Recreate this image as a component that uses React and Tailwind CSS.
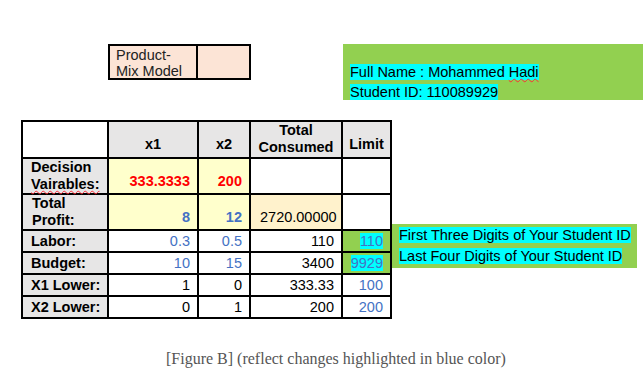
import React from 'react';

const blue = 'text-[#4472c4]';

const rows = [
  { label: 'Labor:', x1: '0.3', x2: '0.5', total: '110', limit: '110', hl: true },
  { label: 'Budget:', x1: '10', x2: '15', total: '3400', limit: '9929', hl: true },
  { label: 'X1 Lower:', x1: '1', x2: '0', total: '333.33', limit: '100', plain: true },
  { label: 'X2 Lower:', x1: '0', x2: '1', total: '200', limit: '200', plain: true },
];

const cell = 'border-2 border-black p-0';

const App = () => {
  return (
    <div className="w-[643px] h-[380px] bg-white overflow-hidden text-black text-[14.5px] font-['Liberation_Sans',Arial,sans-serif]">
      {/* Top row: model box + student info */}
      <div className="flex pt-[44px]">
        <div className="ml-[108px] flex h-[36px] w-[143px] border-2 border-black bg-[#fce4d6]">
          <div className="w-[88px] border-r-2 border-black pl-[6px] pt-[1px] leading-[16px] text-[#222]">
            Product-
            <br />
            Mix Model
          </div>
          <div className="flex-1" />
        </div>
        <div className="ml-[92px] h-[56px] w-[300px] bg-[#92d050] pl-[7px] pt-[18px] leading-[20px]">
          <div>
            <span className="bg-[#00ffff]">
              Full Name : Mohammed <span className="underline decoration-wavy decoration-red-500 decoration-1">Hadi</span>
            </span>
          </div>
          <div>
            <span className="bg-[#00ffff]">Student ID: 110089929</span>
          </div>
        </div>
      </div>

      {/* Table + side notes */}
      <div className="mt-[20px] ml-[21px] flex">
        <table className="table-fixed border-collapse">
          <colgroup>
            <col className="w-[86px]" />
            <col className="w-[90px]" />
            <col className="w-[52px]" />
            <col className="w-[92px]" />
            <col className="w-[49px]" />
          </colgroup>
          <tbody>
            <tr className="h-[35px] font-bold">
              <td className={`${cell} bg-white`} />
              <td className={`${cell} bg-[#e7e6e6] text-center align-bottom pb-[1px]`}>x1</td>
              <td className={`${cell} bg-[#e7e6e6] text-center align-bottom pb-[1px]`}>x2</td>
              <td className={`${cell} bg-[#e7e6e6] text-center align-bottom pb-[1px] leading-[17px]`}>
                Total
                <br />
                Consumed
              </td>
              <td className={`${cell} bg-[#e7e6e6] text-center align-bottom pb-[1px]`}>Limit</td>
            </tr>
            <tr className="h-[35px]">
              <td className={`${cell} bg-[#e7e6e6] font-bold align-bottom pl-[8px] leading-[17px]`}>
                Decision
                <br />
                <span className="underline decoration-wavy decoration-red-500 decoration-1">Vairables:</span>
              </td>
              <td className={`${cell} bg-[#ffffcc] text-right align-bottom pr-[7px] font-bold text-[#ff0000]`}>333.3333</td>
              <td className={`${cell} bg-[#ffffcc] text-right align-bottom pr-[7px] font-bold text-[#ff0000]`}>200</td>
              <td className={`${cell} bg-white`} />
              <td className={`${cell} bg-white`} />
            </tr>
            <tr className="h-[34px]">
              <td className={`${cell} bg-[#e7e6e6] font-bold align-bottom pl-[9px] leading-[17px]`}>
                Total
                <br />
                Profit:
              </td>
              <td className={`${cell} bg-[#ffffcc] text-right align-bottom pr-[7px] font-bold ${blue}`}>8</td>
              <td className={`${cell} bg-[#ffffcc] text-right align-bottom pr-[7px] font-bold ${blue}`}>12</td>
              <td className={`${cell} bg-[#fff2cc] align-bottom pl-[9px]`}>2720.00000</td>
              <td className={`${cell} bg-white`} />
            </tr>
            {rows.map((r) => (
              <tr key={r.label} className="h-[22px] leading-[18px]">
                <td className={`${cell} bg-[#e7e6e6] font-bold pl-[8px]`}>{r.label}</td>
                <td className={`${cell} text-right pr-[7px] ${r.plain ? '' : blue}`}>{r.x1}</td>
                <td className={`${cell} text-right pr-[7px] ${r.plain ? '' : blue}`}>{r.x2}</td>
                <td className={`${cell} text-right pr-[7px]`}>{r.total}</td>
                <td className={`${cell} text-right pr-[7px] ${r.hl ? 'bg-[#92d050]' : ''} ${blue}`}>
                  {r.hl ? <span className="bg-[#00ffff]">{r.limit}</span> : r.limit}
                </td>
              </tr>
            ))}
          </tbody>
        </table>
        <div className="mt-[104px] w-[245px] h-[44px] bg-[#92d050] pl-[7px] pt-[1px] leading-[21px]">
          <div>
            <span className="bg-[#00ffff]">First Three Digits of Your Student ID</span>
          </div>
          <div>
            <span className="bg-[#00ffff]">Last Four Digits of Your Student ID</span>
          </div>
        </div>
      </div>

      {/* Caption */}
      <div className="mt-[30px] pl-[166px] leading-[20px] text-[16px] text-[#555] font-['Liberation_Serif','Times_New_Roman',serif]">
        [Figure B] (reflect changes highlighted in blue color)
      </div>
    </div>
  );
};

export default App;
